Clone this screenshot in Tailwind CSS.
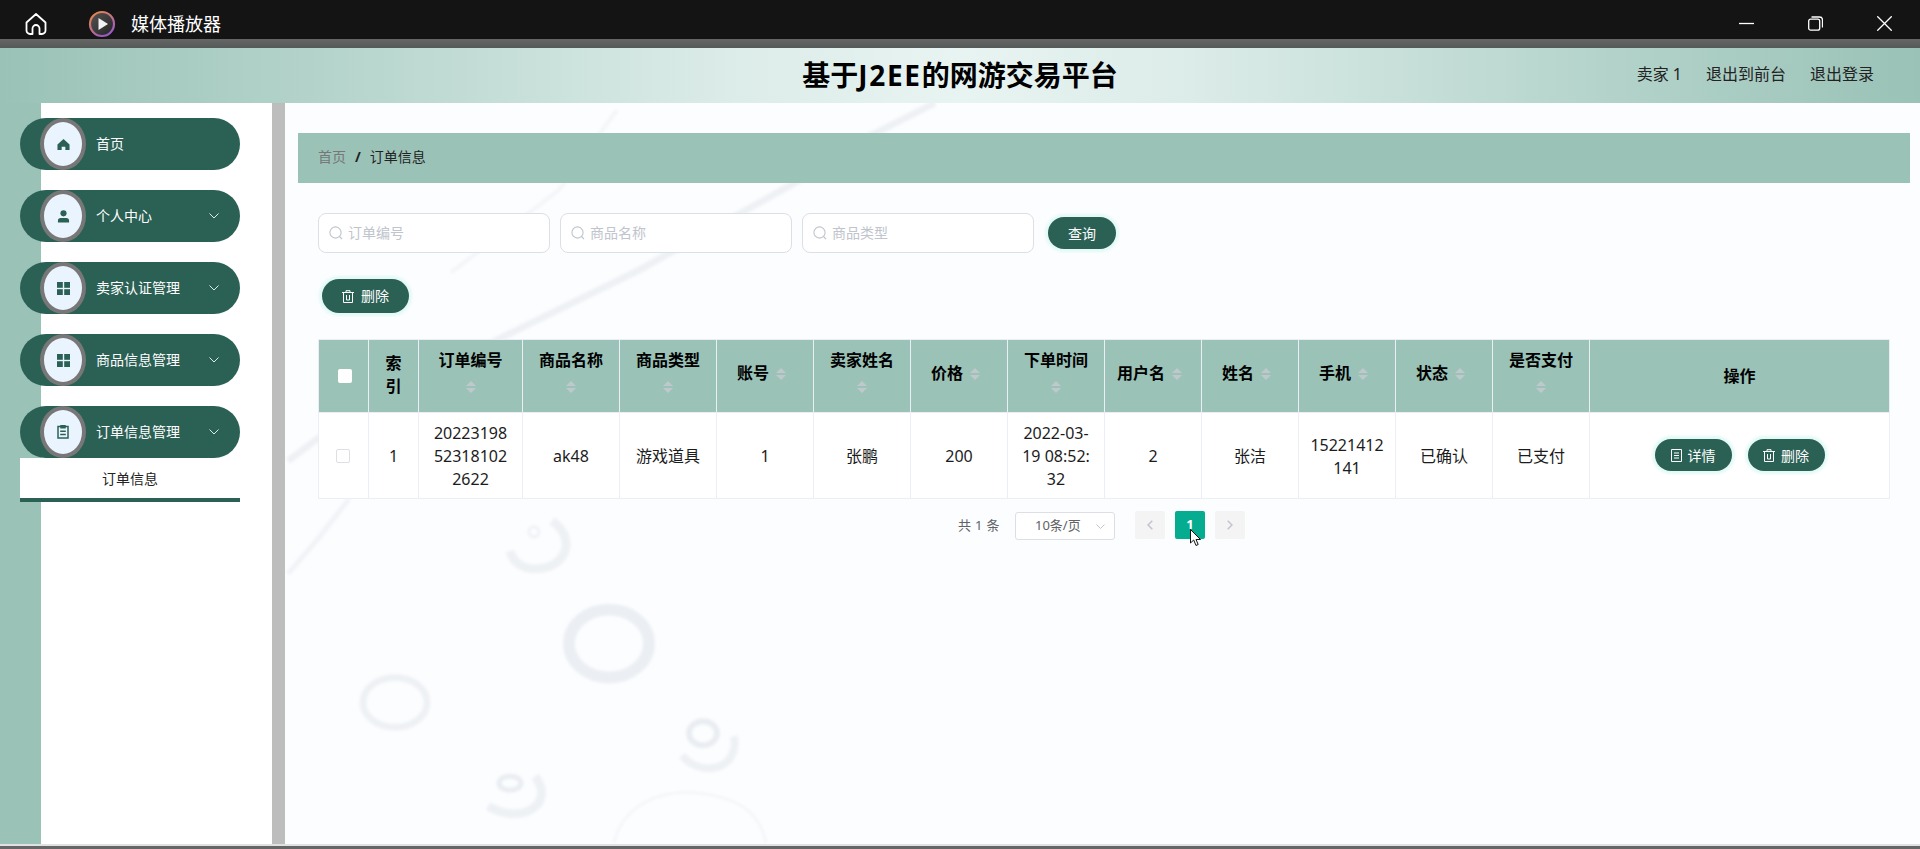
<!DOCTYPE html>
<html lang="zh-CN">

<head>
    <meta charset="UTF-8">
    <title>基于J2EE的网游交易平台</title>
    <script src="https://cdn.jsdelivr.net/npm/@tailwindcss/browser@4"></script>
</head>

<body class="h-[849px] overflow-hidden flex flex-col bg-white font-['Noto_Sans','Noto_Sans_CJK_SC',sans-serif]">
    <!-- window title bar -->
    <div class="h-[39px] shrink-0 bg-[#141414] flex items-center pt-[8px] text-white">
        <svg class="ml-[24px] w-[24px] h-[24px]" viewBox="0 0 24 24" fill="none" stroke="#fff" stroke-width="1.8" stroke-linejoin="round">
            <path d="M2.5 10.5 L12 2 L21.5 10.5 V18.5 a3.5 3.5 0 0 1-3.5 3.5 h-2.5 v-5.5 a3.5 3.5 0 0 0-7 0 v5.5 H6 a3.5 3.5 0 0 1-3.5-3.5 Z" />
        </svg>
        <svg class="ml-[40px] w-[28px] h-[28px]" viewBox="0 0 28 28">
            <defs>
                <linearGradient id="logoRing" x1="0" y1="0" x2="0.6" y2="1">
                    <stop offset="0" stop-color="#f08a3c" />
                    <stop offset="1" stop-color="#9a5bc4" />
                </linearGradient>
                <linearGradient id="logoFill" x1="0" y1="0" x2="1" y2="1">
                    <stop offset="0" stop-color="#555" />
                    <stop offset="1" stop-color="#222" />
                </linearGradient>
            </defs>
            <circle cx="14" cy="14" r="12" fill="url(#logoFill)" stroke="url(#logoRing)" stroke-width="2.2" />
            <path d="M10.5 8 L20 14 L10.5 20 Z" fill="#f2f2f2" />
        </svg>
        <span class="ml-[15px] text-[18px] leading-[24px]">媒体播放器</span>
        <div class="ml-auto flex items-center mr-[28px] gap-[54px]">
            <svg class="w-[15px] h-[15px]" viewBox="0 0 15 15" stroke="#fff" stroke-width="1.3"><path d="M0 7.5 H15" /></svg>
            <svg class="w-[15px] h-[15px]" viewBox="0 0 15 15" fill="none" stroke="#fff" stroke-width="1.3">
                <rect x="0.7" y="3.2" width="11" height="11" rx="2" />
                <path d="M3.5 1 H11.5 a3 3 0 0 1 3 3 V11.5" />
            </svg>
            <svg class="w-[15px] h-[15px]" viewBox="0 0 15 15" stroke="#fff" stroke-width="1.3"><path d="M0.3 0.3 L14.7 14.7 M14.7 0.3 L0.3 14.7" /></svg>
        </div>
    </div>
    <div class="h-[9px] shrink-0 bg-[linear-gradient(#666,#545a58)]"></div>

    <!-- site header -->
    <header class="h-[55px] shrink-0 grid grid-cols-[1fr_auto_1fr] items-center bg-[linear-gradient(90deg,#9ac2b7,#b3d3ca_16%,#dcece8_38%,#e8f4f2_50%,#dcece8_62%,#b3d3ca_84%,#9ac2b7)]">
        <div></div>
        <h1 class="-mt-[2px] text-[28px] leading-[36px] font-bold text-black">基于<span class="tracking-[1.7px]">J2EE</span>的网游交易平台</h1>
        <div class="-mt-[3px] flex justify-end gap-[24px] pr-[46px] text-[16px] leading-[24px] text-[#222]">
            <span>卖家 1</span>
            <span>退出到前台</span>
            <span>退出登录</span>
        </div>
    </header>

    <div class="flex-1 min-h-0 flex">
        <!-- sidebar -->
        <aside class="w-[272px] shrink-0 pt-[15px] pl-[20px] bg-[linear-gradient(to_right,#9ac2b7_41px,#fff_41px)]">
            <div class="w-[220px] flex flex-col gap-[20px] text-white text-[14px]">
                <div class="h-[52px] rounded-[26px] bg-[#2b6155] flex items-center pl-[20px]">
                    <span class="w-[46px] h-[52px] rounded-[50%] border-[4px] border-[#777] bg-[#eaf4fe] flex items-center justify-center">
                        <svg class="w-[13px] h-[13px]" viewBox="0 0 14 14" fill="#2b6155"><path d="M7 1 L13.5 7 V13 H9 V9.5 H5 V13 H0.5 V7 Z" /></svg>
                    </span>
                    <span class="ml-[10px] -mt-[2px]">首页</span>
                </div>
                <div class="h-[52px] rounded-[26px] bg-[#2b6155] flex items-center pl-[20px]">
                    <span class="w-[46px] h-[52px] rounded-[50%] border-[4px] border-[#777] bg-[#eaf4fe] flex items-center justify-center">
                        <svg class="w-[13px] h-[13px]" viewBox="0 0 14 14" fill="#2b6155"><circle cx="7" cy="3.6" r="3.3" /><path d="M1 13.5 V11.5 a3 3 0 0 1 3-3 H10 a3 3 0 0 1 3 3 V13.5 Z" /></svg>
                    </span>
                    <span class="ml-[10px] -mt-[2px]">个人中心</span>
                    <svg class="ml-auto mr-[21px] w-[10px] h-[6px]" viewBox="0 0 10 6" fill="none" stroke="#dfeee9" stroke-width="1"><path d="M0.5 0.5 L5 5 L9.5 0.5" /></svg>
                </div>
                <div class="h-[52px] rounded-[26px] bg-[#2b6155] flex items-center pl-[20px]">
                    <span class="w-[46px] h-[52px] rounded-[50%] border-[4px] border-[#777] bg-[#eaf4fe] flex items-center justify-center">
                        <svg class="w-[13px] h-[13px]" viewBox="0 0 13 13" fill="#2b6155"><rect width="5.8" height="5.8" /><rect x="7.2" width="5.8" height="5.8" /><rect y="7.2" width="5.8" height="5.8" /><rect x="7.2" y="7.2" width="5.8" height="5.8" /></svg>
                    </span>
                    <span class="ml-[10px] -mt-[2px]">卖家认证管理</span>
                    <svg class="ml-auto mr-[21px] w-[10px] h-[6px]" viewBox="0 0 10 6" fill="none" stroke="#dfeee9" stroke-width="1"><path d="M0.5 0.5 L5 5 L9.5 0.5" /></svg>
                </div>
                <div class="h-[52px] rounded-[26px] bg-[#2b6155] flex items-center pl-[20px]">
                    <span class="w-[46px] h-[52px] rounded-[50%] border-[4px] border-[#777] bg-[#eaf4fe] flex items-center justify-center">
                        <svg class="w-[13px] h-[13px]" viewBox="0 0 13 13" fill="#2b6155"><rect width="5.8" height="5.8" /><rect x="7.2" width="5.8" height="5.8" /><rect y="7.2" width="5.8" height="5.8" /><rect x="7.2" y="7.2" width="5.8" height="5.8" /></svg>
                    </span>
                    <span class="ml-[10px] -mt-[2px]">商品信息管理</span>
                    <svg class="ml-auto mr-[21px] w-[10px] h-[6px]" viewBox="0 0 10 6" fill="none" stroke="#dfeee9" stroke-width="1"><path d="M0.5 0.5 L5 5 L9.5 0.5" /></svg>
                </div>
                <div>
                    <div class="h-[52px] rounded-[26px] bg-[#2b6155] flex items-center pl-[20px]">
                        <span class="w-[46px] h-[52px] rounded-[50%] border-[4px] border-[#777] bg-[#eaf4fe] flex items-center justify-center">
                            <svg class="w-[12px] h-[14px]" viewBox="0 0 12 14" fill="none" stroke="#2b6155" stroke-width="1.5"><path d="M4 1.5 H1 V13 H11 V1.5 H8" /><path d="M4 0.8 H8 V2.8 H4 Z" fill="#2b6155" /><path d="M3.2 6.2 H8.8 M3.2 9.5 H8.8" /></svg>
                        </span>
                        <span class="ml-[10px] -mt-[2px]">订单信息管理</span>
                        <svg class="ml-auto mr-[21px] w-[10px] h-[6px]" viewBox="0 0 10 6" fill="none" stroke="#dfeee9" stroke-width="1"><path d="M0.5 0.5 L5 5 L9.5 0.5" /></svg>
                    </div>
                    <div class="h-[44px] bg-white border-b-[4px] border-[#2b6155] flex items-center justify-center text-[#222]">订单信息</div>
                </div>
            </div>
        </aside>

        <div class="w-[13px] shrink-0 bg-[#bdbdbd]"></div>

        <!-- main content -->
        <main class="relative flex-1 min-w-0 bg-[#fcfdff] pt-[30px] pl-[13px] pr-[10px]">
            <!-- faint watermark of the page background -->
            <svg class="absolute inset-0 w-full h-full pointer-events-none" viewBox="285 103 1635 743" preserveAspectRatio="none" fill="none">
                <defs><filter id="soft"><feGaussianBlur stdDeviation="1.6" /></filter></defs>
                <g filter="url(#soft)" stroke="#eef1f4">
                    <path d="M935 103 L872 135 L795 183 L640 270 L502 338 L317 440 L288 462" stroke-width="7" />
                    <path d="M617 110 L559 190 L451 273" stroke-width="4" stroke="#f3f5f8" />
                    <path d="M349 500 L318 540 L288 575" stroke-width="5" stroke="#f1f3f6" />
                    <ellipse cx="609" cy="645" rx="40" ry="34" stroke-width="12" stroke="#ebeff3" />
                    <ellipse cx="395" cy="704" rx="32" ry="25" stroke-width="7" />
                    <path d="M552 522 C578 540 566 572 532 570 C518 568 512 560 510 552" stroke-width="9" />
                    <circle cx="534" cy="533" r="5" stroke-width="3" />
                    <ellipse cx="703" cy="735" rx="14" ry="12" stroke-width="6" stroke="#e9edf1" />
                    <path d="M734 738 C740 772 700 780 682 757" stroke-width="8" />
                    <ellipse cx="510" cy="785" rx="11" ry="7" stroke-width="5" stroke="#e9edf1" />
                    <path d="M535 778 C556 806 522 828 488 808" stroke-width="9" />
                    <path d="M614 845 C622 808 660 790 700 795 C740 800 760 815 766 845" stroke-width="2" stroke="#f1f3f6" />
                </g>
            </svg>

            <div class="relative">
                <div class="h-[50px] bg-[#9ac2b7] flex items-center pl-[20px] text-[14px] leading-[20px]">
                    <span class="-mt-[2px] text-[#777]">首页</span>
                    <span class="-mt-[2px] mx-[9px] font-bold text-[#222]">/</span>
                    <span class="-mt-[2px] text-[#222]">订单信息</span>
                </div>

                <div class="px-[20px]">
                    <!-- search form -->
                    <div class="mt-[30px] flex items-center gap-[10px] text-[14px] text-[#c0c4cc]">
                        <div class="w-[232px] h-[40px] rounded-[8px] border border-[#dcdfe6] bg-white flex items-center pl-[10px] gap-[5px]">
                            <svg class="w-[14px] h-[14px]" viewBox="0 0 14 14" fill="none" stroke="#c0c4cc" stroke-width="1.1"><circle cx="6.5" cy="6.5" r="5.6" /><path d="M10.5 10.5 L13 13" /></svg>
                            <span class="-mt-[2px]">订单编号</span>
                        </div>
                        <div class="w-[232px] h-[40px] rounded-[8px] border border-[#dcdfe6] bg-white flex items-center pl-[10px] gap-[5px]">
                            <svg class="w-[14px] h-[14px]" viewBox="0 0 14 14" fill="none" stroke="#c0c4cc" stroke-width="1.1"><circle cx="6.5" cy="6.5" r="5.6" /><path d="M10.5 10.5 L13 13" /></svg>
                            <span class="-mt-[2px]">商品名称</span>
                        </div>
                        <div class="w-[232px] h-[40px] rounded-[8px] border border-[#dcdfe6] bg-white flex items-center pl-[10px] gap-[5px]">
                            <svg class="w-[14px] h-[14px]" viewBox="0 0 14 14" fill="none" stroke="#c0c4cc" stroke-width="1.1"><circle cx="6.5" cy="6.5" r="5.6" /><path d="M10.5 10.5 L13 13" /></svg>
                            <span class="-mt-[2px]">商品类型</span>
                        </div>
                        <button class="ml-[4px] w-[68px] h-[32px] rounded-[16px] bg-[#2b6155] text-white shadow-[0_0_3px_3px_#e2f9f5]">查询</button>
                    </div>

                    <button class="mt-[26px] ml-[4px] w-[87px] h-[34px] rounded-[17px] bg-[#2b6155] text-white text-[14px] flex items-center justify-center gap-[7px] shadow-[0_0_3px_3px_#e2f9f5]">
                        <svg class="w-[12px] h-[13px]" viewBox="0 0 12 13" fill="none" stroke="#fff" stroke-width="1"><path d="M0 2.5 H12 M4 2.5 V0.7 H8 V2.5 M1.5 2.5 V12.5 H10.5 V2.5 M4.5 5 V10 H7.5 V5" /></svg>
                        <span class="-mt-[1px]">删除</span>
                    </button>

                    <!-- order table -->
                    <table class="mt-[26px] w-[1571px] table-fixed border-collapse text-[16px] leading-[23px] text-center text-[#1c1c1c]">
                        <colgroup>
                            <col class="w-[50px]">
                            <col class="w-[50px]">
                            <col class="w-[104px]">
                            <col class="w-[97px]">
                            <col class="w-[97px]">
                            <col class="w-[97px]">
                            <col class="w-[97px]">
                            <col class="w-[97px]">
                            <col class="w-[97px]">
                            <col class="w-[97px]">
                            <col class="w-[97px]">
                            <col class="w-[97px]">
                            <col class="w-[97px]">
                            <col class="w-[97px]">
                            <col class="w-[300px]">
                        </colgroup>
                        <thead class="bg-[#9ac2b7] text-black">
                            <tr class="h-[73px]">
                                <th class="border border-[#ebeef5] p-0"><span class="block w-[14px] h-[14px] mx-auto translate-x-[1px] rounded-[2px] bg-white"></span></th>
                                <th class="border border-[#ebeef5] p-0 pb-[2px] font-bold">索<br>引</th>
                                <th class="border border-[#ebeef5] p-0 pb-[11px] font-bold">
                                    订单编号
                                    <svg class="block mx-auto mt-[9px] w-[10px] h-[12px]" viewBox="0 0 10 12" fill="#bfc9cb"><path d="M5 0 L10 5 H0 Z M0 7 H10 L5 12 Z" /></svg>
                                </th>
                                <th class="border border-[#ebeef5] p-0 pb-[11px] font-bold">
                                    商品名称
                                    <svg class="block mx-auto mt-[9px] w-[10px] h-[12px]" viewBox="0 0 10 12" fill="#bfc9cb"><path d="M5 0 L10 5 H0 Z M0 7 H10 L5 12 Z" /></svg>
                                </th>
                                <th class="border border-[#ebeef5] p-0 pb-[11px] font-bold">
                                    商品类型
                                    <svg class="block mx-auto mt-[9px] w-[10px] h-[12px]" viewBox="0 0 10 12" fill="#bfc9cb"><path d="M5 0 L10 5 H0 Z M0 7 H10 L5 12 Z" /></svg>
                                </th>
                                <th class="border border-[#ebeef5] p-0 pr-[7px] font-bold">
                                    <span class="flex items-center justify-center gap-[7px] -mt-[5px]">账号<svg class="w-[10px] h-[12px]" viewBox="0 0 10 12" fill="#bfc9cb"><path d="M5 0 L10 5 H0 Z M0 7 H10 L5 12 Z" /></svg></span>
                                </th>
                                <th class="border border-[#ebeef5] p-0 pb-[11px] font-bold">
                                    卖家姓名
                                    <svg class="block mx-auto mt-[9px] w-[10px] h-[12px]" viewBox="0 0 10 12" fill="#bfc9cb"><path d="M5 0 L10 5 H0 Z M0 7 H10 L5 12 Z" /></svg>
                                </th>
                                <th class="border border-[#ebeef5] p-0 pr-[7px] font-bold">
                                    <span class="flex items-center justify-center gap-[7px] -mt-[5px]">价格<svg class="w-[10px] h-[12px]" viewBox="0 0 10 12" fill="#bfc9cb"><path d="M5 0 L10 5 H0 Z M0 7 H10 L5 12 Z" /></svg></span>
                                </th>
                                <th class="border border-[#ebeef5] p-0 pb-[11px] font-bold">
                                    下单时间
                                    <svg class="block mx-auto mt-[9px] w-[10px] h-[12px]" viewBox="0 0 10 12" fill="#bfc9cb"><path d="M5 0 L10 5 H0 Z M0 7 H10 L5 12 Z" /></svg>
                                </th>
                                <th class="border border-[#ebeef5] p-0 pr-[7px] font-bold">
                                    <span class="flex items-center justify-center gap-[7px] -mt-[5px]">用户名<svg class="w-[10px] h-[12px]" viewBox="0 0 10 12" fill="#bfc9cb"><path d="M5 0 L10 5 H0 Z M0 7 H10 L5 12 Z" /></svg></span>
                                </th>
                                <th class="border border-[#ebeef5] p-0 pr-[7px] font-bold">
                                    <span class="flex items-center justify-center gap-[7px] -mt-[5px]">姓名<svg class="w-[10px] h-[12px]" viewBox="0 0 10 12" fill="#bfc9cb"><path d="M5 0 L10 5 H0 Z M0 7 H10 L5 12 Z" /></svg></span>
                                </th>
                                <th class="border border-[#ebeef5] p-0 pr-[7px] font-bold">
                                    <span class="flex items-center justify-center gap-[7px] -mt-[5px]">手机<svg class="w-[10px] h-[12px]" viewBox="0 0 10 12" fill="#bfc9cb"><path d="M5 0 L10 5 H0 Z M0 7 H10 L5 12 Z" /></svg></span>
                                </th>
                                <th class="border border-[#ebeef5] p-0 pr-[7px] font-bold">
                                    <span class="flex items-center justify-center gap-[7px] -mt-[5px]">状态<svg class="w-[10px] h-[12px]" viewBox="0 0 10 12" fill="#bfc9cb"><path d="M5 0 L10 5 H0 Z M0 7 H10 L5 12 Z" /></svg></span>
                                </th>
                                <th class="border border-[#ebeef5] p-0 pb-[11px] font-bold">
                                    是否支付
                                    <svg class="block mx-auto mt-[9px] w-[10px] h-[12px]" viewBox="0 0 10 12" fill="#bfc9cb"><path d="M5 0 L10 5 H0 Z M0 7 H10 L5 12 Z" /></svg>
                                </th>
                                <th class="border border-[#ebeef5] p-0 font-bold">操作</th>
                            </tr>
                        </thead>
                        <tbody class="bg-white">
                            <tr class="h-[86px]">
                                <td class="border border-[#ebeef5] p-0"><span class="block w-[14px] h-[14px] mx-auto -translate-x-[1px] rounded-[2px] border border-[#dcdfe6] bg-white"></span></td>
                                <td class="border border-[#ebeef5] p-0 pt-[2px]">1</td>
                                <td class="border border-[#ebeef5] p-0 pt-[2px]">20223198<br>52318102<br>2622</td>
                                <td class="border border-[#ebeef5] p-0 pt-[2px]">ak48</td>
                                <td class="border border-[#ebeef5] p-0 pt-[2px]">游戏道具</td>
                                <td class="border border-[#ebeef5] p-0 pt-[2px]">1</td>
                                <td class="border border-[#ebeef5] p-0 pt-[2px]">张鹏</td>
                                <td class="border border-[#ebeef5] p-0 pt-[2px]">200</td>
                                <td class="border border-[#ebeef5] p-0 pt-[2px]">2022-03-<br>19 08:52:<br>32</td>
                                <td class="border border-[#ebeef5] p-0 pt-[2px]">2</td>
                                <td class="border border-[#ebeef5] p-0 pt-[2px]">张洁</td>
                                <td class="border border-[#ebeef5] p-0 pt-[2px]">15221412<br>141</td>
                                <td class="border border-[#ebeef5] p-0 pt-[2px]">已确认</td>
                                <td class="border border-[#ebeef5] p-0 pt-[2px]">已支付</td>
                                <td class="border border-[#ebeef5] p-0">
                                    <div class="flex justify-center gap-[16px] -mt-[1px] text-white text-[14px]">
                                        <button class="w-[77px] h-[32px] rounded-[16px] bg-[#2b6155] flex items-center justify-center gap-[6px] shadow-[0_0_3px_3px_#e2f9f5]">
                                            <svg class="w-[11px] h-[13px]" viewBox="0 0 11 13" fill="none" stroke="#fff" stroke-width="1"><path d="M0.5 0.5 H10.5 V12.5 H0.5 Z M3 4 H8 M3 6.5 H8 M3 9 H8" /></svg>
                                            <span>详情</span>
                                        </button>
                                        <button class="w-[77px] h-[32px] rounded-[16px] bg-[#2b6155] flex items-center justify-center gap-[6px] shadow-[0_0_3px_3px_#e2f9f5]">
                                            <svg class="w-[12px] h-[13px]" viewBox="0 0 12 13" fill="none" stroke="#fff" stroke-width="1"><path d="M0 2.5 H12 M4 2.5 V0.7 H8 V2.5 M1.5 2.5 V12.5 H10.5 V2.5 M4.5 5 V10 H7.5 V5" /></svg>
                                            <span>删除</span>
                                        </button>
                                    </div>
                                </td>
                            </tr>
                        </tbody>
                    </table>

                    <!-- pagination -->
                    <div class="mt-[12px] pl-[640px] flex items-start text-[13px] text-[#606266]">
                        <span class="w-[42px] h-[28px] leading-[28px] whitespace-nowrap tracking-[0.3px]">共 1 条</span>
                        <div class="ml-[15px] mt-[1px] w-[100px] h-[28px] border border-[#dcdfe6] rounded-[3px] bg-white flex items-center pl-[19px]">
                            <span>10条/页</span>
                            <svg class="ml-auto mr-[9px] w-[9px] h-[5px]" viewBox="0 0 9 5" fill="none" stroke="#c0c4cc"><path d="M0.5 0.5 L4.5 4.5 L8.5 0.5" /></svg>
                        </div>
                        <div class="ml-[20px] w-[30px] h-[28px] rounded-[2px] bg-[#f4f4f5] flex items-center justify-center">
                            <svg class="w-[6px] h-[10px]" viewBox="0 0 6 10" fill="none" stroke="#c0c4cc" stroke-width="1.5"><path d="M5.3 0.7 L1 5 L5.3 9.3" /></svg>
                        </div>
                        <div class="relative ml-[10px] w-[30px] h-[28px] rounded-[2px] bg-[#05ac90] text-white font-bold flex items-center justify-center">
                            1
                            <svg class="absolute left-[15px] top-[18px] w-[12px] h-[18px]" viewBox="0 0 12 18" fill="#fff" stroke="#111" stroke-width="1"><path d="M0.5 0.5 V14 L3.7 11 L6 16.5 L8.2 15.5 L6 10.5 H10.5 Z" /></svg>
                        </div>
                        <div class="ml-[10px] w-[30px] h-[28px] rounded-[2px] bg-[#f4f4f5] flex items-center justify-center">
                            <svg class="w-[6px] h-[10px]" viewBox="0 0 6 10" fill="none" stroke="#c0c4cc" stroke-width="1.5"><path d="M0.7 0.7 L5 5 L0.7 9.3" /></svg>
                        </div>
                    </div>
                </div>
            </div>
        </main>
    </div>

    <div class="h-[2px] shrink-0 bg-[#dfe1e3]"></div>
    <div class="h-[3px] shrink-0 bg-[#666]"></div>
</body>

</html>
